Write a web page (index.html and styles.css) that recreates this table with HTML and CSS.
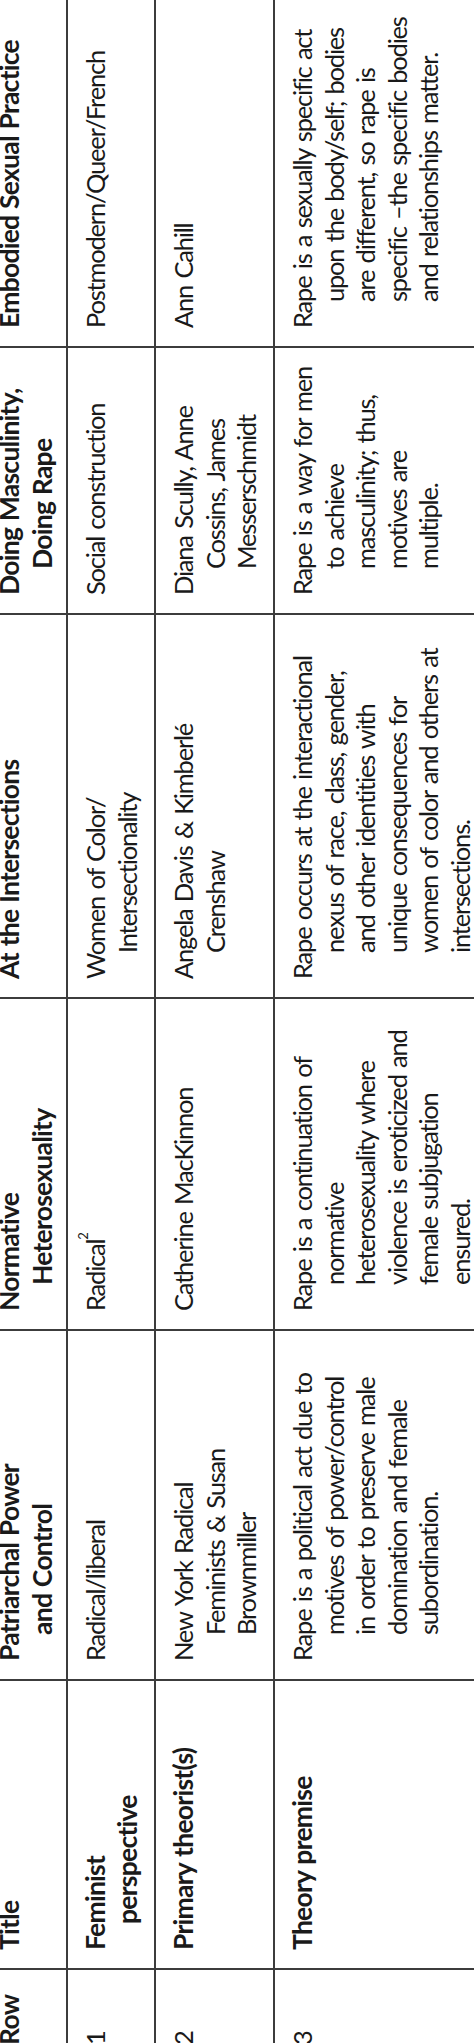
FILE: index.html
```html
<!DOCTYPE html>
<html lang="en">
<head>
<meta charset="utf-8">
<title>Feminist theories of rape</title>
<link rel="stylesheet" href="styles.css">
</head>
<body>
<div class="viewport">
  <div class="sheet">
    <div class="cell head">Row</div>
    <div class="cell head">Title</div>
    <div class="cell head">Patriarchal Power<br>and Control</div>
    <div class="cell head">Normative<br>Heterosexuality</div>
    <div class="cell head">At the Intersections</div>
    <div class="cell head">Doing Masculinity,<br>Doing Rape</div>
    <div class="cell head">Embodied Sexual Practice</div>

    <div class="cell">1</div>
    <div class="cell label">Feminist<br>perspective</div>
    <div class="cell">Radical/liberal</div>
    <div class="cell">Radical<sup class="note">2</sup></div>
    <div class="cell">Women of Color/<br>Intersectionality</div>
    <div class="cell">Social construction</div>
    <div class="cell">Postmodern/Queer/French</div>

    <div class="cell">2</div>
    <div class="cell label">Primary theorist(s)</div>
    <div class="cell">New York Radical<br>Feminists &amp; Susan<br>Brownmiller</div>
    <div class="cell">Catherine MacKinnon</div>
    <div class="cell">Angela Davis &amp; Kimberlé<br>Crenshaw</div>
    <div class="cell">Diana Scully, Anne<br>Cossins, James<br>Messerschmidt</div>
    <div class="cell">Ann Cahill</div>

    <div class="cell">3</div>
    <div class="cell label">Theory premise</div>
    <div class="cell">Rape is a political act due to<br>motives of power/control<br>in order to preserve male<br>domination and female<br>subordination.</div>
    <div class="cell">Rape is a continuation of<br>normative<br>heterosexuality where<br>violence is eroticized and<br>female subjugation<br>ensured.</div>
    <div class="cell">Rape occurs at the interactional<br>nexus of race, class, gender,<br>and other identities with<br>unique consequences for<br>women of color and others at<br>intersections.</div>
    <div class="cell">Rape is a way for men<br>to achieve<br>masculinity; thus,<br>motives are<br>multiple.</div>
    <div class="cell">Rape is a sexually specific act<br>upon the body/self; bodies<br>are different, so rape is<br>specific –the specific bodies<br>and relationships matter.</div>
  </div>
</div>
</body>
</html>
```
FILE: styles.css
```css
html, body {
  margin: 0;
  padding: 0;
  background: #ffffff;
}

.viewport {
  width: 474px;
  height: 2043px;
  overflow: hidden;
  background: #ffffff;
}

.sheet {
  width: 2120px;
  display: grid;
  grid-template-columns: 93px 287px 348px 330px 382px 265px 403px;
  grid-template-rows: 80px 86px 117px 220px;
  gap: 2px;
  background: #3c3c3c;
  transform-origin: 0 0;
  transform: translate(-14px, 2063px) rotate(-90deg);
  font-family: Lato, "Open Sans", sans-serif;
  font-size: 25.5px;
  letter-spacing: -1.2px;
  word-spacing: 2px;
  color: #1a1a1a;
}

.cell {
  background: #ffffff;
  padding: 12px 8px 0 44px;
  text-indent: -26px;
  line-height: 31.6px;
  white-space: nowrap;
  overflow: hidden;
}

.head {
  padding-top: 7px;
  font-size: 26.5px;
  letter-spacing: -0.75px;
  word-spacing: 1px;
  line-height: 33px;
  font-weight: 700;
}

.label {
  font-weight: 700;
  font-size: 26.5px;
  letter-spacing: -0.75px;
  word-spacing: 1px;
}

.note {
  font-size: 13px;
  line-height: 0;
  vertical-align: 17px;
  letter-spacing: 0;
}
```
